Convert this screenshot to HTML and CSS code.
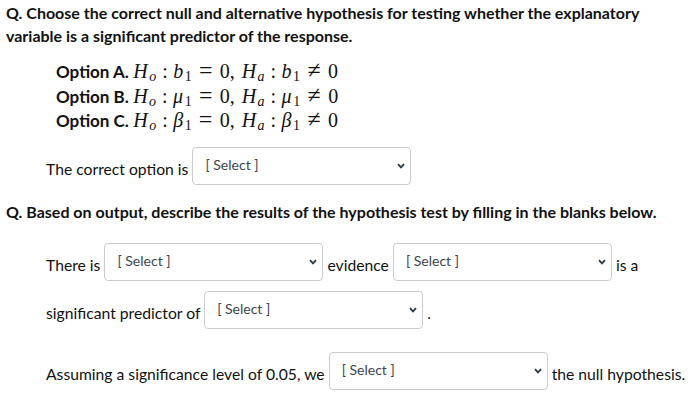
FILE: index.html
```html
<!DOCTYPE html>
<html>
<head>
<meta charset="utf-8">
<link rel="stylesheet" href="styles.css">
</head>
<body>
<div class="page">
  <p class="q-title">Q. Choose the correct null and alternative hypothesis for testing whether the explanatory variable is a significant predictor of the response.</p>
  <div class="options">
    <div class="opt"><b>Option A.</b> <span class="math"><i>H</i><sub><i>o</i></sub><span class="colon">:</span><i>b</i><sub>1</sub><span class="rel">=</span>0<span class="punct">,</span><i>H</i><sub><i>a</i></sub><span class="colon">:</span><i>b</i><sub>1</sub><span class="rel">≠</span>0</span></div>
    <div class="opt"><b>Option B.</b> <span class="math"><i>H</i><sub><i>o</i></sub><span class="colon">:</span><i>μ</i><sub>1</sub><span class="rel">=</span>0<span class="punct">,</span><i>H</i><sub><i>a</i></sub><span class="colon">:</span><i>μ</i><sub>1</sub><span class="rel">≠</span>0</span></div>
    <div class="opt"><b>Option C.</b> <span class="math"><i>H</i><sub><i>o</i></sub><span class="colon">:</span><i>β</i><sub>1</sub><span class="rel">=</span>0<span class="punct">,</span><i>H</i><sub><i>a</i></sub><span class="colon">:</span><i>β</i><sub>1</sub><span class="rel">≠</span>0</span></div>
  </div>
  <p class="answer answer-first">The correct option is <span class="sel"><span class="sel-inner"><span class="sel-text">[ Select ]</span><svg class="chev" width="8" height="6" viewBox="0 0 8 6"><polyline points="1,1.2 4,4.3 7,1.2" fill="none" stroke="#2d3b45" stroke-width="1.9"/></svg></span></span></p>
  <p class="q-title q2">Q. Based on output, describe the results of the hypothesis test by filling in the blanks below.</p>
  <p class="answer answer-blanks">There is <span class="sel"><span class="sel-inner"><span class="sel-text">[ Select ]</span><svg class="chev" width="8" height="6" viewBox="0 0 8 6"><polyline points="1,1.2 4,4.3 7,1.2" fill="none" stroke="#2d3b45" stroke-width="1.9"/></svg></span></span> evidence <span class="sel"><span class="sel-inner"><span class="sel-text">[ Select ]</span><svg class="chev" width="8" height="6" viewBox="0 0 8 6"><polyline points="1,1.2 4,4.3 7,1.2" fill="none" stroke="#2d3b45" stroke-width="1.9"/></svg></span></span> is a significant predictor of <span class="sel"><span class="sel-inner"><span class="sel-text">[ Select ]</span><svg class="chev" width="8" height="6" viewBox="0 0 8 6"><polyline points="1,1.2 4,4.3 7,1.2" fill="none" stroke="#2d3b45" stroke-width="1.9"/></svg></span></span> .</p>
  <p class="answer answer-last">Assuming a significance level of 0.05, we <span class="sel"><span class="sel-inner"><span class="sel-text">[ Select ]</span><svg class="chev" width="8" height="6" viewBox="0 0 8 6"><polyline points="1,1.2 4,4.3 7,1.2" fill="none" stroke="#2d3b45" stroke-width="1.9"/></svg></span></span> the null hypothesis.</p>
</div>
</body>
</html>
```
FILE: styles.css
```css
html, body {
  margin: 0;
  padding: 0;
  background: #ffffff;
}
.page {
  padding: 1px 6px 0 6px;
  font-family: Lato, "Open Sans", sans-serif;
  color: #111111;
  width: 687px;
}
.q-title {
  margin: 0;
  font-size: 16px;
  font-weight: 700;
  line-height: 23px;
}
.options {
  margin: 13px 0 0 50px;
}
.opt {
  font-size: 17px;
  line-height: 24.5px;
  white-space: nowrap;
}
.opt b {
  font-weight: 700;
}
.math {
  font-family: "Liberation Serif", "Times New Roman", serif;
  font-size: 20px;
  line-height: 0;
}
.math i {
  font-style: italic;
}
.math sub {
  font-size: 14px;
  vertical-align: -3px;
  line-height: 0;
  margin-left: 1.5px;
}
.math .colon {
  display: inline-block;
  width: 5px;
  text-align: center;
  margin: 0 6px;
  line-height: 0;
}
.math .rel {
  display: inline-block;
  width: 16px;
  text-align: center;
  font-size: 24px;
  line-height: 0;
  margin: 0 6px;
}
.math .punct {
  margin-right: 7px;
}
.answer {
  margin: 0 0 0 40px;
  font-size: 15.7px;
  line-height: 22px;
}
.answer-first {
  margin-top: 8.5px;
}
.q2 {
  margin-top: 10px;
}
.answer-blanks {
  margin-top: 15px;
}
.answer-last {
  margin-top: 13px;
}
.sel {
  display: inline-block;
  box-sizing: border-box;
  width: 219px;
  height: 38px;
  margin: 5px 0;
  border: 1px solid #c7cdd1;
  border-radius: 4px;
  background: #ffffff;
  overflow: hidden;
  vertical-align: -15px;
}
.sel-inner {
  display: flex;
  align-items: flex-start;
  justify-content: space-between;
  height: 100%;
  padding: 0 5px 0 12px;
}
.sel-text {
  font-size: 14px;
  line-height: 20px;
  padding-top: 7px;
  color: #3c464d;
}
.chev {
  align-self: center;
  display: block;
}
```
